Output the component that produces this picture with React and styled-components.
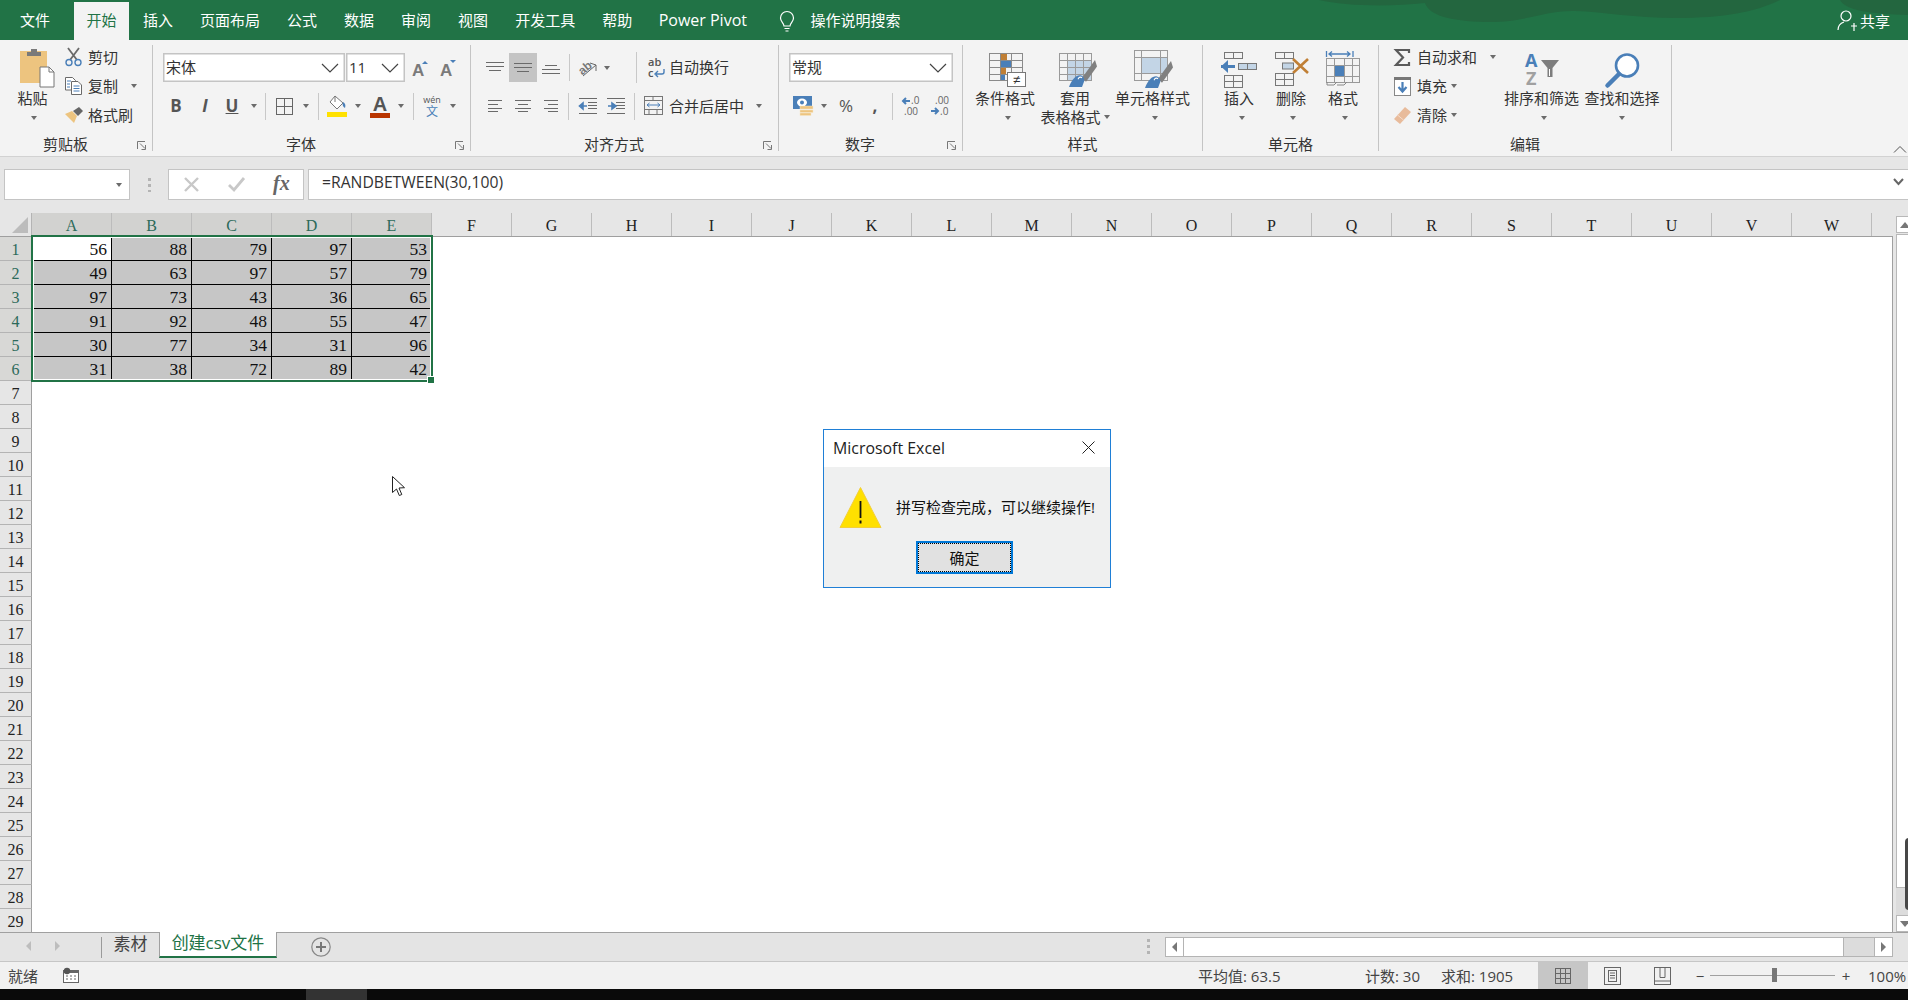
import React from "react";
import styled, { createGlobalStyle } from "styled-components";

const UI = `"Open Sans", "Noto Sans CJK SC", sans-serif`;
const SERIF = `"Liberation Serif", "Noto Sans CJK SC", serif`;
const GRAY = "#6a6a6a";
const BLUE = "#4a7fb8";
const TAN = "#edc47f";
const BROWN = "#c07f35";
const PALE = "#c3d5e6";
const LINE = "#8a8a8a";

const Global = createGlobalStyle`
  html, body { margin: 0; padding: 0; background: #fff; }
  * { box-sizing: border-box; }
  svg { overflow: visible; }
`;

const Frame = styled.div`
  position: relative; width: 1908px; height: 1000px; overflow: hidden;
  display: flex; flex-direction: column; font: 15px/20px ${UI}; color: #333; background: #fff;
`;

/* ---------- title bar ---------- */
const TitleBar = styled.div`
  position: relative; flex: none; height: 40px; background: #217346;
  display: flex; align-items: flex-end; padding-left: 6px; color: #fff;
`;
const Watermark = styled.svg`position: absolute; left: 0; top: 0;`;
const Tab = styled.div`
  position: relative; flex: none; height: 38px; line-height: 37px; padding: 0 ${p => p.$pad ?? 13.5}px;
  margin-left: ${p => p.$ml || 0}px; white-space: nowrap; font-size: ${p => p.$fs || 15}px;
  background: ${p => (p.$active ? "#f3f3f3" : "transparent")};
  color: ${p => (p.$active ? "#217346" : "#fff")};
`;
const Bulb = styled.svg`position: relative; flex: none; margin: 0 0 7px 20px;`;
const Share = styled.div`
  position: relative; margin-left: auto; margin-right: 18px; height: 38px; display: flex; align-items: center; gap: 3px;
`;

/* ---------- ribbon ---------- */
const Ribbon = styled.div`
  position: relative; flex: none; height: 117px; background: #f3f3f3; padding-top: 5px;
  display: flex; border-bottom: 1px solid #d2d2d2;
`;
const Group = styled.div`
  position: relative; flex: none; width: ${p => p.$w}px; height: 106px; border-right: 1px solid #c4c4c4;
`;
const GroupBody = styled.div`display: flex; height: 90px;`;
const Column = styled.div`flex: none; display: flex; flex-direction: column; margin-left: ${p => p.$ml || 0}px; height: 90px;`;
const GroupLabel = styled.div`
  height: 16px; line-height: 18px; text-align: center; padding-right: ${p => (p.$launch ? 21 : 0)}px; white-space: nowrap;
`;
const Launcher = styled.svg`position: absolute; right: 5px; bottom: 1px;`;
const Row = styled.div`
  display: flex; align-items: center; height: ${p => p.$h}px; margin-top: ${p => p.$mt || 0}px;
`;
const Slot = styled.div`
  flex: none; display: flex; align-items: center; justify-content: center; height: 100%;
  width: ${p => p.$w}px; margin-left: ${p => p.$ml || 0}px;
  background: ${p => p.$bg || "transparent"};
`;
const LeftSlot = styled(Slot)`justify-content: flex-start;`;
const Txt = styled.span`flex: none; white-space: nowrap; margin-left: ${p => p.$ml || 0}px; margin-bottom: ${p => p.$mb || 0}px;`;
const Caret = styled.i`
  display: block; flex: none; width: 0; height: 0; margin-left: ${p => p.$ml || 0}px;
  border-left: 3.5px solid transparent; border-right: 3.5px solid transparent; border-top: 4px solid #6b6b6b;
`;
const Sep = styled.div`
  flex: none; width: 1px; height: ${p => p.$h || 27}px; background: #c8c8c8; margin-left: ${p => p.$ml || 0}px; margin-right: ${p => p.$mr || 0}px;
`;
const Combo = styled.div`
  flex: none; display: flex; align-items: center; justify-content: space-between; height: 29px;
  width: ${p => p.$w}px; margin-left: ${p => p.$ml || 0}px; padding: 0 5px 0 2px;
  background: #fff; border: 1px solid #c4c4c4; box-shadow: inset 0 0 0 0.5px #c4c4c4;
`;
const ComboText = styled.span`padding-bottom: 2px;`;
const Paste = styled.div`
  flex: none; width: 65px; height: 90px; display: flex; flex-direction: column; align-items: center;
`;
const PasteIcon = styled.div`height: 43px; padding: 2px 0 0 9px;`;
const SmallButton = styled.div`
  display: flex; align-items: center; height: 24px; margin-bottom: 5px; white-space: nowrap;
`;
const IconCell = styled.div`flex: none; width: 23px; display: flex; align-items: center;`;
const Large = styled.div`
  flex: none; width: ${p => p.$w}px; margin-left: ${p => p.$ml || 0}px; height: 90px; display: flex; flex-direction: column; align-items: center;
`;
const LargeIcon = styled.div`
  height: 43px; display: flex; align-items: flex-end; justify-content: center; width: 100%; padding-left: ${p => p.$dx || 0}px;
`;
const LargeLine = styled.div`height: 19.5px; display: flex; align-items: center; justify-content: center; white-space: nowrap; line-height: 20px;`;
const CaretLine = styled(LargeLine)`padding-top: 1px;`;
const Collapse = styled.svg`position: absolute; right: 1px; bottom: 3px;`;

/* ---------- formula bar ---------- */
const FormulaBand = styled.div`
  flex: none; height: 56px; background: #e6e6e6; padding-top: 11px; display: flex; align-items: flex-start; border-top: 1px solid #e6e6e6;
`;
const FieldBox = styled.div`
  flex: none; height: 31px; background: #fff; border: 1px solid #c4c4c4; margin-left: ${p => p.$ml}px;
  width: ${p => p.$w}px; display: flex; align-items: center; justify-content: ${p => p.$justify || "flex-start"};
`;
const Grip = styled.div`
  flex: none; width: 3px; height: ${p => p.$h}px; margin-left: ${p => p.$ml}px; margin-top: ${p => p.$mt || 0}px;
  background: repeating-linear-gradient(#b4b4b4 0 3px, transparent 3px 6px);
`;
const Formula = styled.div`
  flex: 1; height: 31px; margin-left: 4px; background: #fff; border: 1px solid #c4c4c4; border-right: none;
  display: flex; align-items: center; padding: 0 4px 5px 13px; justify-content: space-between; font-size: 15.7px;
`;

/* ---------- sheet ---------- */
const SheetArea = styled.div`flex: none; height: 719px; display: flex; background: #e6e6e6;`;
const GridPane = styled.div`position: relative; flex: none; width: 1893px; display: flex; flex-direction: column;`;
const HeaderRow = styled.div`flex: none; height: 24px; display: flex; border-bottom: 1px solid #9f9f9f;`;
const Corner = styled.div`flex: none; width: 32px; display: flex; align-items: center; justify-content: flex-end; padding-right: 3px; border-right: 1px solid #b4b4b4;`;
const ColHead = styled.div`
  flex: none; width: 80px; text-align: center; font: 16px/23px ${SERIF}; padding-top: 1px; border-right: 1px solid #bcbcbc;
  background: ${p => (p.$sel ? "#d2d2d0" : "#e6e6e6")};
  color: ${p => (p.$sel ? "#2c6a5a" : "#222")};
`;
const Rows = styled.div`flex: 1; background: #fff; border-right: 1px solid #a0a0a0; overflow: hidden;`;
const SheetRow = styled.div`display: flex; height: 24px;`;
const RowHead = styled.div`
  flex: none; width: 32px; text-align: center; font: 16px/23px ${SERIF}; padding-top: 1px; border-right: 1px solid #9f9f9f; border-bottom: 1px solid #b4b4b4;
  background: ${p => (p.$sel ? "#d8d8d6" : "#e6e6e6")};
  color: ${p => (p.$sel ? "#2c6a5a" : "#222")};
`;
const Cell = styled.div`
  flex: none; width: 80px; text-align: right; padding: 1px 4px 0 0; font: 17.5px/22px ${SERIF}; color: #111;
  border-right: 1px solid #000; border-bottom: 1px solid #000;
  background: ${p => (p.$first ? "#fff" : "#c6c6c6")};
`;
const Selection = styled.div`
  position: absolute; left: 31px; top: 22px; width: 402px; height: 147px; border: 2px solid #217346; pointer-events: none;
  box-shadow: inset 0 0 0 1px #fff;
`;
const Handle = styled.div`
  position: absolute; right: -3px; bottom: -3px; width: 6px; height: 6px; background: #217346; outline: 1px solid #fff;
`;
const VScroll = styled.div`
  flex: none; width: 12px; margin-left: 3px; padding-top: 3px; display: flex; flex-direction: column; overflow: hidden;
`;
const ScrollBtn = styled.div`
  flex: none; height: ${p => p.$h}px; background: #fff; border: 1px solid #b8b8b8; border-right: none;
  display: flex; align-items: center; justify-content: center; padding-left: 4px;
`;
const VThumb = styled.div`flex: none; height: 654px; margin-top: 1px; background: #fff; border: 1px solid #b8b8b8; border-right: none;`;
const VTrack = styled.div`flex: 1; background: #dcdcdc;`;
const Peek = styled.div`
  position: absolute; left: 1905px; top: 838px; width: 10px; height: 72px; background: #474747; border-radius: 4px;
`;
const Triangle = styled.i`
  display: block; width: 0; height: 0;
  ${p => p.$dir === "up" && `border-left:5px solid transparent;border-right:5px solid transparent;border-bottom:6px solid #777;`}
  ${p => p.$dir === "down" && `border-left:5px solid transparent;border-right:5px solid transparent;border-top:6px solid #777;`}
  ${p => p.$dir === "left" && `border-top:5px solid transparent;border-bottom:5px solid transparent;border-right:5px solid ${p.$c || "#777"};`}
  ${p => p.$dir === "right" && `border-top:5px solid transparent;border-bottom:5px solid transparent;border-left:5px solid ${p.$c || "#777"};`}
`;

/* ---------- sheet tabs ---------- */
const TabsBar = styled.div`
  flex: none; height: 30px; background: #e4e4e4; display: flex; align-items: flex-start; border-top: 1px solid #a0a0a0; border-bottom: 1px solid #c6c6c6;
`;
const NavSlot = styled.div`flex: none; height: 26px; margin-left: ${p => p.$ml}px; width: 6px; display: flex; align-items: center; justify-content: center;`;
const TabDivider = styled.div`flex: none; width: 1px; height: 21px; margin: 4px 0 0 ${p => p.$ml}px; background: #9a9a9a;`;
const SheetTab = styled.div`
  flex: none; width: ${p => p.$w}px; height: 25px; font-size: 17px; line-height: 22px; text-align: center; white-space: nowrap;
  ${p => p.$active
    ? `background:#fff;color:#217346;border-left:1px solid #a0a0a0;border-right:1px solid #a0a0a0;border-bottom:2px solid #217346;margin-top:-1px;height:26px;`
    : `color:#444;`}
`;
const AddSheet = styled.svg`flex: none; margin: 4px 0 0 34px;`;
const HScrollGroup = styled.div`
  margin-left: auto; margin-right: 15px; display: flex; align-items: flex-start; height: 100%;
`;
const HBar = styled.div`
  flex: none; display: flex; width: 728px; height: 20px; margin: 4px 0 0 15px; border: 1px solid #b4b4b4; background: #dcdcdc;
`;
const HBtn = styled.div`flex: none; width: 18px; background: #fff; display: flex; align-items: center; justify-content: center; ${p => p.$end ? "margin-left:auto;border-left:1px solid #b4b4b4;" : "border-right:1px solid #b4b4b4;"}`;
const HThumb = styled.div`flex: none; width: 660px; background: #fff; border-right: 1px solid #b4b4b4;`;

/* ---------- status bar ---------- */
const StatusBar = styled.div`
  flex: none; height: 27px; background: #f1f1f1; display: flex; align-items: center; color: #444; padding-left: 8px;
`;
const StatusRight = styled.div`margin-left: auto; display: flex; align-items: center; height: 100%; width: 710px;`;
const ViewButton = styled.div`
  flex: none; width: ${p => p.$w}px; margin-left: ${p => p.$ml || 0}px; height: 100%; display: flex; align-items: center; justify-content: center;
  background: ${p => (p.$on ? "#c6c6c6" : "transparent")};
`;
const Zoomer = styled.div`position: relative; flex: none; width: 125px; height: 1px; background: #a0a0a0; margin-left: 5px;`;
const ZoomThumb = styled.div`position: absolute; left: 62px; top: -7px; width: 5px; height: 14px; background: #777;`;
const Taskbar = styled.div`
  position: relative; flex: none; height: 11px; background: #0a0a0a; overflow: hidden;
`;
const TaskActive = styled.div`position: absolute; left: 306px; top: 0; width: 61px; height: 11px; background: #333;`;
const Clock = styled.div`position: absolute; left: 1762px; top: 7px; font-size: 15px; line-height: 20px; color: #fff;`;

/* ---------- dialog ---------- */
const Dialog = styled.div`
  position: absolute; left: 823px; top: 429px; width: 288px; height: 159px; background: #eff0f0; border: 1px solid #1f7fd6;
  display: flex; flex-direction: column;
`;
const DialogTitle = styled.div`
  flex: none; height: 37px; background: #fff; display: flex; align-items: center; justify-content: space-between;
  padding: 0 15px 2px 9px; font-size: 15.9px; color: #222;
`;
const DialogBody = styled.div`flex: 1; display: flex; align-items: flex-start; padding: 20px 0 0 16px;`;
const DialogText = styled.div`margin: 9.5px 0 0 15px; white-space: nowrap; color: #111;`;
const DialogFoot = styled.div`flex: none; height: 46px; display: flex; justify-content: center; padding-right: 5px;`;
const OkButton = styled.div`
  width: 97px; height: 33px; border: 2px solid #0078d7; background: #e1e1e1; color: #111; font-size: 15px;
  display: flex; align-items: center; justify-content: center; outline: 1px dotted #000; outline-offset: -3px;
`;
const Pointer = styled.svg`position: absolute; left: 392px; top: 476px;`;

/* ---------- icons ---------- */
const Table = ({ x = 0, y = 0, w, h, cols = [], rows = [], c = LINE, sw = 1 }) => (
  <g stroke={c} strokeWidth={sw} fill="none">
    <rect x={x + 0.5} y={y + 0.5} width={w} height={h} />
    {cols.map(v => <path key={"c" + v} d={`M${x + v + 0.5} ${y}v${h}`} />)}
    {rows.map(v => <path key={"r" + v} d={`M${x} ${y + v + 0.5}h${w}`} />)}
  </g>
);
const LaunchIcon = () => (
  <Launcher width="10" height="9" viewBox="0 0 10 9" fill="none" stroke="#777">
    <path d="M.5 8V.5H8M3 2.5l5 5M8.5 4v4.5H4.5" />
  </Launcher>
);
const Chevron = () => (
  <svg width="18" height="10" viewBox="0 0 18 10" fill="none" stroke="#444" strokeWidth="1.2"><path d="M1 1l8 8 8-8" /></svg>
);
const Clipboard = () => (
  <svg width="35" height="41" viewBox="0 0 35 41">
    <rect x="0" y="4" width="27" height="32" fill={TAN} />
    <path d="M7 5h14v4H7zM11 2h6v4h-6z" fill="#7a7a7a" />
    <path d="M20 20h9l5 5v15H20z" fill="#fff" stroke="#777" />
    <path d="M29 20v5h5" fill="none" stroke="#777" />
  </svg>
);
const Scissors = () => (
  <svg width="18" height="18" viewBox="0 0 18 18" fill="none">
    <path d="M3 0l9 12M14 0L5 12" stroke={GRAY} strokeWidth="1.8" />
    <circle cx="4" cy="14.5" r="3" stroke={BLUE} strokeWidth="1.4" />
    <circle cx="13" cy="14.5" r="3" stroke={BLUE} strokeWidth="1.4" />
  </svg>
);
const CopyIcon = () => (
  <svg width="18" height="18" viewBox="0 0 18 18" fill="none">
    <path d="M.5.5h7l3 3V13H.5z" fill="#fff" stroke={GRAY} />
    <path d="M6.5 4.5H13l3.5 3.5v9.5h-10z" fill="#fff" stroke={GRAY} />
    <path d="M2 4h4M2 7h3M2 10h3M8.5 9h6M8.5 11.5h6M8.5 14h6" stroke={BLUE} />
  </svg>
);
const BrushIcon = () => (
  <svg width="18" height="16" viewBox="0 0 18 16">
    <path d="M0 7l7-3 5 5-3 7z" fill={TAN} />
    <path d="M8 4l6-4 4 4-5 5z" fill="#666" />
  </svg>
);
const FontA = ({ up }) => (
  <svg width="18" height="20" viewBox="0 0 18 20">
    <text x="0" y="18" fontFamily="Liberation Sans" fontWeight="700" fontSize="17" fill="#7a7a7a">A</text>
    <path d={up ? "M10 6l3-3 3 3z" : "M10 2l3 3 3-3z"} fill={BLUE} />
  </svg>
);
const Glyph = styled.span`
  font-weight: ${p => (p.$b ? 700 : 400)}; color: #555;
  font-style: ${p => (p.$i ? "italic" : "normal")}; text-decoration: ${p => (p.$u ? "underline" : "none")};
  font-family: "Open Sans", sans-serif; font-size: 17px; line-height: 20px;
`;
const BorderIcon = () => (
  <svg width="17" height="17" viewBox="0 0 17 17"><Table w={16} h={16} cols={[8]} rows={[8]} c="#666" /></svg>
);
const FillIcon = () => (
  <svg width="20" height="22" viewBox="0 0 20 22">
    <path d="M8 1l8 7-6 6-7-7z" fill="#fff" stroke="#777" />
    <path d="M8 1v6" stroke="#777" />
    <path d="M16 7c2 1 3 3 2 6-2-1-3-3-2-6z" fill={BLUE} />
    <rect x="0" y="17" width="20" height="5" fill="#ffe100" />
  </svg>
);
const ColorA = () => (
  <svg width="20" height="24" viewBox="0 0 20 24">
    <text x="10" y="17" textAnchor="middle" fontFamily="Liberation Sans" fontWeight="700" fontSize="20" fill="#555">A</text>
    <rect x="0" y="19" width="20" height="5" fill="#b93500" />
  </svg>
);
const WenIcon = () => (
  <svg width="18" height="22" viewBox="0 0 18 22">
    <text x="9" y="8" textAnchor="middle" fontFamily="Open Sans" fontSize="9" fill="#555">wén</text>
    <text x="9" y="21" textAnchor="middle" fontFamily="Noto Sans CJK SC" fontSize="12" fill={BLUE}>文</text>
  </svg>
);
const Lines = ({ rows, w = 18, h = 14 }) => (
  <svg width={w} height={h} viewBox={`0 0 ${w} ${h}`} stroke="#6a6a6a">
    {rows.map(([a, b, y]) => <path key={y} d={`M${a} ${y + 0.5}H${b}`} />)}
  </svg>
);
const Orient = () => (
  <svg width="20" height="18" viewBox="0 0 20 18">
    <text x="0" y="13" transform="rotate(-40 7 9)" fontFamily="Liberation Sans" fontWeight="700" fontSize="12" fill="#777">ab</text>
    <path d="M5 17L18 6M12 4l6 2v6" fill="none" stroke="#666" />
  </svg>
);
const Indent = ({ rev }) => (
  <svg width="18" height="16" viewBox="0 0 18 16">
    <path d="M0 .5h18M9 4.5h9M9 7.5h9M9 10.5h9M0 15.5h18" stroke="#6a6a6a" />
    {rev
      ? <path d="M1 8h4V5l4 3-4 3V8" fill={BLUE} stroke={BLUE} strokeWidth="1.6" />
      : <path d="M8 8H4V5L0.5 8 4 11V8" fill={BLUE} stroke={BLUE} strokeWidth="1.6" />}
  </svg>
);
const WrapIcon = () => (
  <svg width="17" height="20" viewBox="0 0 17 20">
    <text x="0" y="8" fontFamily="Open Sans" fontWeight="600" fontSize="11" fill="#555">ab</text>
    <text x="0" y="19" fontFamily="Open Sans" fontWeight="600" fontSize="11" fill="#555">c</text>
    <path d="M16 11v3c0 1-1 2-2 2H8M10 13l-3 3 3 3" fill="none" stroke={BLUE} strokeWidth="1.4" />
  </svg>
);
const MergeIcon = () => (
  <svg width="20" height="20" viewBox="0 0 20 20">
    <Table w={18} h={18} rows={[4, 13]} cols={[]} c="#777" />
    <path d="M9 .5v4M5 13.5v5M13 13.5v5" stroke="#777" />
    <path d="M3 9h13M5.5 7L3 9l2.5 2M13.5 7L16 9l-2.5 2" fill="none" stroke={BLUE} />
  </svg>
);
const Currency = () => (
  <svg width="21" height="20" viewBox="0 0 21 20">
    <rect x="0" y="0" width="19" height="13" fill={BLUE} />
    <ellipse cx="9" cy="6.5" rx="5" ry="4" fill="#fff" />
    <circle cx="9" cy="6.5" r="2" fill={BLUE} />
    <path d="M7 10h13v3H7zM7 14h13v2.5H7zM7 17h11v2.5H7z" fill={TAN} stroke="#f7e6c6" strokeWidth=".5" />
  </svg>
);
const Decimal = ({ more }) => (
  <svg width="19" height="20" viewBox="0 0 19 20" fontFamily="Open Sans" fontSize="10" fill="#666">
    {more ? (
      <>
        <text x="5" y="8">.00</text>
        <path d="M1 15h6M5 12l3 3-3 3" stroke={BLUE} strokeWidth="2" fill="none" />
        <text x="10" y="19">.0</text>
      </>
    ) : (
      <>
        <path d="M8 5H2M4 2L1 5l3 3" stroke={BLUE} strokeWidth="2" fill="none" />
        <text x="9" y="8">.0</text>
        <text x="2" y="19">.00</text>
      </>
    )}
  </svg>
);
const Brush = ({ x, y }) => (
  <g transform={`translate(${x} ${y}) scale(1 1.28)`}>
    <path d="M26 0l2 5-11 12-4-3z" fill="#808080" />
    <path d="M0 21c3-6 7-9 11-9 3 0 5 3 4 5l-2 4z" fill={BLUE} />
    <path d="M9 15c1-2 3-2 4-1" stroke="#fff" fill="none" />
  </g>
);
const CondIcon = () => (
  <svg width="38" height="35" viewBox="0 0 38 35">
    <path d="M11 0h7v7h-7zM11 14h6v7h-6z" fill={BROWN} />
    <path d="M11 7h11v7H11zM11 21h5v6h-5z" fill={BLUE} />
    <Table w={33} h={27} cols={[11, 22]} rows={[7, 14, 21]} c="#8a8a8a" />
    <rect x="18.5" y="19.5" width="18" height="14" fill="#fff" stroke="#777" />
    <text x="27.5" y="31" textAnchor="middle" fontFamily="Liberation Sans" fontSize="13" fill="#333">≠</text>
  </svg>
);
const TableFmtIcon = () => (
  <svg width="38" height="35" viewBox="0 0 38 35">
    <rect x="8" y="7" width="25" height="20" fill={PALE} />
    <Table w={32} h={27} cols={[8, 16, 24]} rows={[7, 14, 21]} c="#9a9a9a" />
    <Brush x={10} y={7} />
  </svg>
);
const CellStyleIcon = () => (
  <svg width="39" height="38" viewBox="0 0 39 38">
    <rect x="8" y="7" width="25" height="16" fill={PALE} />
    <Table w={33} h={30} cols={[7, 26]} rows={[7, 23]} c="#9a9a9a" />
    <Brush x={11} y={11} />
  </svg>
);
const InsertIcon = () => (
  <svg width="37" height="36" viewBox="0 0 37 36">
    <Table x={3} y={0} w={18} h={6} cols={[9]} c="#777" />
    <path d="M0 14.5h14" stroke={BLUE} strokeWidth="3" />
    <path d="M7 8l-7 6.5L7 21z" fill={BLUE} />
    <rect x="17.5" y="11.5" width="18" height="6" fill={PALE} stroke="#777" />
    <path d="M26.5 11.5v6" stroke="#777" />
    <Table x={3} y={23} w={18} h={12} cols={[9]} rows={[6]} c="#777" />
  </svg>
);
const DeleteIcon = () => (
  <svg width="36" height="36" viewBox="0 0 36 36">
    <Table x={0} y={0} w={18} h={6} cols={[9]} c="#777" />
    <rect x="7.5" y="11" width="11" height="6" fill={PALE} stroke="#777" />
    <path d="M18 7l15 14M33 7L18 21" stroke={BROWN} strokeWidth="2.6" />
    <Table x={0} y={21} w={18} h={12} cols={[9]} rows={[6]} c="#777" />
  </svg>
);
const FormatIcon = () => (
  <svg width="34" height="37" viewBox="0 0 34 37">
    <path d="M.5 0v6M27 0v6M3 3h21M6 .5L3 3l3 2.5M21 .5L24 3l-3 2.5" stroke={BLUE} fill="none" strokeWidth="1.3" />
    <rect x="8" y="14" width="10" height="11" fill={BLUE} />
    <Table y={7} w={33} h={24} cols={[8, 18, 26]} rows={[7, 18]} c="#999" />
    <path d="M1 31v3h7l3-3M11 34h7l3-3" fill="none" stroke="#888" />
  </svg>
);
const Sigma = () => (
  <svg width="16" height="17" viewBox="0 0 16 17"><path d="M15 4V1H2l7 7.5L2 16h13v-3" fill="none" stroke="#5a5a5a" strokeWidth="2.2" /></svg>
);
const FillDown = () => (
  <svg width="17" height="19" viewBox="0 0 17 19">
    <rect x=".5" y=".5" width="16" height="18" fill="#fff" stroke="#888" />
    <rect x="0" y="0" width="17" height="3" fill="#777" />
    <path d="M8.5 5v9M4.5 10l4 4.5 4-4.5" stroke={BLUE} strokeWidth="2.2" fill="none" />
  </svg>
);
const Eraser = () => (
  <svg width="17" height="17" viewBox="0 0 17 17"><path d="M11 0l6 5-11 12-6-5z" fill="#e8bb9b" /><path d="M3.5 8l6 5" stroke="#f5dccb" /></svg>
);
const SortIcon = () => (
  <svg width="36" height="36" viewBox="0 0 36 36" fontFamily="Open Sans" fontWeight="700" fontSize="18">
    <text x="0" y="15" fill={BLUE}>A</text>
    <text x="1" y="33" fill="#a0a0a0">Z</text>
    <path d="M16 8h18l-6.5 8v9h-5v-9z" fill="#7d7d7d" />
    <path d="M24.5 17v7" stroke="#fff" />
  </svg>
);
const Magnifier = () => (
  <svg width="35" height="35" viewBox="0 0 35 35" fill="none">
    <circle cx="22" cy="12.5" r="11" stroke={BLUE} strokeWidth="2.6" fill="#fff" />
    <path d="M14 21L2.5 32.5" stroke={BLUE} strokeWidth="4.5" strokeLinecap="round" />
  </svg>
);

const cols = "ABCDEFGHIJKLMNOPQRSTUVW".split("");
const data = [
  [56, 88, 79, 97, 53],
  [49, 63, 97, 57, 79],
  [97, 73, 43, 36, 65],
  [91, 92, 48, 55, 47],
  [30, 77, 34, 31, 96],
  [31, 38, 72, 89, 42],
];
const rowNumbers = Array.from({ length: 29 }, (_, i) => i + 1);

export default function App() {
  return (
    <Frame>
      <Global />
      <TitleBar>
        <Watermark width="1908" height="40" viewBox="0 0 1908 40">
          <path d="M1319 0c25 6 70 7 106 3 4 12 24 18 60 19 40 1 60-12 90-11 30 1 60 7 100 7 50 0 80-6 105-18z" fill="#23663f" />
          <path d="M1840 0c5 10 30 14 68 15V0z" fill="#23663f" />
        </Watermark>
        <Tab $pad={14}>文件</Tab>
        <Tab $active $ml={10} $pad={12.5}>开始</Tab>
        <Tab $ml={.5}>插入</Tab>
        <Tab>页面布局</Tab>
        <Tab>公式</Tab>
        <Tab>数据</Tab>
        <Tab>审阅</Tab>
        <Tab>视图</Tab>
        <Tab>开发工具</Tab>
        <Tab>帮助</Tab>
        <Tab $pad={13} $fs={16}>Power Pivot</Tab>
        <Bulb width="14" height="22" viewBox="0 0 14 22" fill="none" stroke="#fff" strokeWidth="1.2">
          <path d="M4 15c0-3-3.5-4-3.5-8a6.5 6.5 0 0113 0c0 4-3.5 5-3.5 8zM4.5 17.5h5M5.5 20h3" />
        </Bulb>
        <Tab $pad={13} $ml={3.5}>操作说明搜索</Tab>
        <Share>
          <svg width="20" height="22" viewBox="0 0 20 22" fill="none" stroke="#fff" strokeWidth="1.2">
            <circle cx="9" cy="6" r="5" />
            <path d="M1 20c0-5 3-7 6-8M14 16h6M17 13v8" />
          </svg>
          <Txt>共享</Txt>
        </Share>
      </TitleBar>

      <Ribbon>
        <Group $w={153}>
          <GroupBody>
            <Paste>
              <PasteIcon><Clipboard /></PasteIcon>
              <LargeLine>粘贴</LargeLine>
              <CaretLine><Caret $ml={3} /></CaretLine>
            </Paste>
            <Column>
              <SmallButton><IconCell><Scissors /></IconCell><Txt>剪切</Txt></SmallButton>
              <SmallButton><IconCell><CopyIcon /></IconCell><Txt>复制</Txt><Caret $ml={13} /></SmallButton>
              <SmallButton><IconCell><BrushIcon /></IconCell><Txt>格式刷</Txt></SmallButton>
            </Column>
          </GroupBody>
          <GroupLabel $launch>剪贴板</GroupLabel>
          <LaunchIcon />
        </Group>

        <Group $w={318}>
          <GroupBody>
            <Column $ml={10}>
              <Row $h={29} $mt={8}>
                <Combo $w={182}><ComboText>宋体</ComboText><Chevron /></Combo>
                <Combo $w={59} $ml={1}><ComboText>11</ComboText><Chevron /></Combo>
                <Slot $w={27} $ml={2.5}><FontA up /></Slot>
                <Slot $w={27} $ml={1}><FontA /></Slot>
              </Row>
              <Row $h={30} $mt={9}>
                <Slot $w={26}><Glyph $b>B</Glyph></Slot>
                <Slot $w={32}><Glyph $i $b>I</Glyph></Slot>
                <Slot $w={22}><Glyph $b $u>U</Glyph></Slot>
                <Slot $w={6} $ml={8}><Caret /></Slot>
                <Sep $ml={8} />
                <Slot $w={17} $ml={10}><BorderIcon /></Slot>
                <Slot $w={6} $ml={10}><Caret /></Slot>
                <Sep $ml={9} />
                <Slot $w={20} $ml={8}><FillIcon /></Slot>
                <Slot $w={6} $ml={8}><Caret /></Slot>
                <Slot $w={20} $ml={9}><ColorA /></Slot>
                <Slot $w={6} $ml={8}><Caret /></Slot>
                <Sep $ml={9} />
                <Slot $w={18} $ml={9}><WenIcon /></Slot>
                <Slot $w={6} $ml={9}><Caret /></Slot>
              </Row>
            </Column>
          </GroupBody>
          <GroupLabel $launch>字体</GroupLabel>
          <LaunchIcon />
        </Group>

        <Group $w={308}>
          <GroupBody>
            <Column>
              <Row $h={29} $mt={8}>
                <Slot $w={18} $ml={15}><Lines rows={[[0, 18, 1], [0, 18, 5], [3, 15, 9]]} /></Slot>
                <Slot $w={28} $ml={5} $bg="#c4c4c4"><Lines rows={[[0, 18, 2], [0, 18, 6], [3, 15, 10]]} /></Slot>
                <Slot $w={18} $ml={5}><Lines rows={[[3, 15, 4], [0, 18, 8], [0, 18, 12]]} /></Slot>
                <Sep $ml={9} />
                <Slot $w={20} $ml={8}><Orient /></Slot>
                <Slot $w={6} $ml={6}><Caret /></Slot>
                <Sep $ml={26} $h={31} />
                <Slot $w={17} $ml={11}><WrapIcon /></Slot>
                <Txt $ml={4} $mb={2}>自动换行</Txt>
              </Row>
              <Row $h={30} $mt={9}>
                <Slot $w={14} $ml={17}><Lines w={14} h={14} rows={[[0, 14, 1], [0, 10, 5], [0, 14, 9], [0, 10, 12]]} /></Slot>
                <Slot $w={16} $ml={13}><Lines w={16} h={14} rows={[[0, 16, 1], [3, 13, 5], [0, 16, 9], [3, 13, 12]]} /></Slot>
                <Slot $w={14} $ml={13}><Lines w={14} h={14} rows={[[0, 14, 1], [4, 14, 5], [0, 14, 9], [4, 14, 12]]} /></Slot>
                <Sep $ml={10} />
                <Slot $w={18} $ml={10}><Indent /></Slot>
                <Slot $w={18} $ml={10}><Indent rev /></Slot>
                <Sep $ml={9} />
                <Slot $w={20} $ml={9}><MergeIcon /></Slot>
                <Txt $ml={5}>合并后居中</Txt>
                <Caret $ml={12} />
              </Row>
            </Column>
          </GroupBody>
          <GroupLabel $launch>对齐方式</GroupLabel>
          <LaunchIcon />
        </Group>

        <Group $w={184}>
          <GroupBody>
            <Column $ml={10}>
              <Row $h={29} $mt={8}>
                <Combo $w={164}><ComboText>常规</ComboText><Chevron /></Combo>
              </Row>
              <Row $h={30} $mt={9}>
                <Slot $w={21} $ml={4}><Currency /></Slot>
                <Slot $w={6} $ml={7}><Caret /></Slot>
                <Slot $w={16} $ml={11}><Glyph>%</Glyph></Slot>
                <Slot $w={8} $ml={17}><Glyph $b>,</Glyph></Slot>
                <Sep $ml={13} />
                <Slot $w={19} $ml={9}><Decimal /></Slot>
                <Slot $w={19} $ml={9}><Decimal more /></Slot>
              </Row>
            </Column>
          </GroupBody>
          <GroupLabel $launch>数字</GroupLabel>
          <LaunchIcon />
        </Group>

        <Group $w={240}>
          <GroupBody>
            <Large $w={60} $ml={12}>
              <LargeIcon $dx={5}><CondIcon /></LargeIcon>
              <LargeLine>条件格式</LargeLine>
              <CaretLine><Caret $ml={5} /></CaretLine>
            </Large>
            <Large $w={70} $ml={5}>
              <LargeIcon $dx={6}><TableFmtIcon /></LargeIcon>
              <LargeLine>套用</LargeLine>
              <LargeLine>表格格式<Caret $ml={3} /></LargeLine>
            </Large>
            <Large $w={75} $ml={5}>
              <LargeIcon $dx={2}><CellStyleIcon /></LargeIcon>
              <LargeLine>单元格样式</LargeLine>
              <CaretLine><Caret $ml={5} /></CaretLine>
            </Large>
          </GroupBody>
          <GroupLabel>样式</GroupLabel>
        </Group>

        <Group $w={176}>
          <GroupBody>
            <Large $w={60} $ml={6}>
              <LargeIcon><InsertIcon /></LargeIcon>
              <LargeLine>插入</LargeLine>
              <CaretLine><Caret $ml={5} /></CaretLine>
            </Large>
            <Large $w={44}>
              <LargeIcon $dx={4}><DeleteIcon /></LargeIcon>
              <LargeLine>删除</LargeLine>
              <CaretLine><Caret $ml={3} /></CaretLine>
            </Large>
            <Large $w={60}>
              <LargeIcon><FormatIcon /></LargeIcon>
              <LargeLine>格式</LargeLine>
              <CaretLine><Caret $ml={4} /></CaretLine>
            </Large>
          </GroupBody>
          <GroupLabel>单元格</GroupLabel>
        </Group>

        <Group $w={293}>
          <GroupBody>
            <Column $ml={15}>
              <SmallButton><IconCell><Sigma /></IconCell><Txt>自动求和</Txt><Caret $ml={13} /></SmallButton>
              <SmallButton><IconCell><FillDown /></IconCell><Txt>填充</Txt><Caret $ml={4} /></SmallButton>
              <SmallButton><IconCell><Eraser /></IconCell><Txt>清除</Txt><Caret $ml={4} /></SmallButton>
            </Column>
            <Large $w={75} $ml={8}>
              <LargeIcon $dx={2}><SortIcon /></LargeIcon>
              <LargeLine>排序和筛选</LargeLine>
              <CaretLine><Caret $ml={5} /></CaretLine>
            </Large>
            <Large $w={76} $ml={5}>
              <LargeIcon><Magnifier /></LargeIcon>
              <LargeLine>查找和选择</LargeLine>
              <CaretLine><Caret /></CaretLine>
            </Large>
          </GroupBody>
          <GroupLabel>编辑</GroupLabel>
        </Group>

        <Collapse width="14" height="8" viewBox="0 0 14 8" fill="none" stroke="#555"><path d="M1 7.5l6-6 6 6" /></Collapse>
      </Ribbon>

      <FormulaBand>
        <FieldBox $ml={4} $w={126} $justify="flex-end"><Slot $w={20}><Caret /></Slot></FieldBox>
        <Grip $ml={18} $h={14} $mt={9} />
        <FieldBox $ml={17} $w={136}>
          <Slot $w={45}>
            <svg width="15" height="15" viewBox="0 0 15 15" stroke="#c8c8c8" strokeWidth="2.4"><path d="M1 1l13 13M14 1L1 14" /></svg>
          </Slot>
          <Slot $w={45}>
            <svg width="17" height="15" viewBox="0 0 17 15" stroke="#c8c8c8" strokeWidth="2.8" fill="none"><path d="M1 8l5 5L16 1" /></svg>
          </Slot>
          <Slot $w={45}>
            <svg width="20" height="20" viewBox="0 0 20 20"><text x="1" y="15" fontFamily="Liberation Serif" fontStyle="italic" fontWeight="700" fontSize="20" fill="#666">fx</text></svg>
          </Slot>
        </FieldBox>
        <Formula>
          <span>=RANDBETWEEN(30,100)</span>
          <svg width="11" height="8" viewBox="0 0 11 8" fill="none" stroke="#666" strokeWidth="2"><path d="M1 1l4.5 5L10 1" /></svg>
        </Formula>
      </FormulaBand>

      <SheetArea>
        <GridPane>
          <HeaderRow>
            <Corner>
              <svg width="16" height="16" viewBox="0 0 16 16"><path d="M16 0v16H0z" fill="#bcbcbc" /></svg>
            </Corner>
            {cols.map((c, i) => <ColHead key={c} $sel={i < 5}>{c}</ColHead>)}
          </HeaderRow>
          <Rows>
            {rowNumbers.map(n => (
              <SheetRow key={n}>
                <RowHead $sel={n <= 6}>{n}</RowHead>
                {n <= 6 && data[n - 1].map((v, i) => <Cell key={i} $first={n === 1 && i === 0}>{v}</Cell>)}
              </SheetRow>
            ))}
          </Rows>
          <Selection><Handle /></Selection>
        </GridPane>
        <VScroll>
          <ScrollBtn $h={17}><Triangle $dir="up" /></ScrollBtn>
          <VThumb />
          <VTrack />
          <ScrollBtn $h={17}><Triangle $dir="down" /></ScrollBtn>
        </VScroll>
      </SheetArea>

      <TabsBar>
        <NavSlot $ml={25}><Triangle $dir="left" $c="#bdbdbd" /></NavSlot>
        <NavSlot $ml={23}><Triangle $dir="right" $c="#bdbdbd" /></NavSlot>
        <TabDivider $ml={41} />
        <SheetTab $w={57}>素材</SheetTab>
        <SheetTab $w={118} $active>创建csv文件</SheetTab>
        <AddSheet width="20" height="20" viewBox="0 0 20 20" fill="none" stroke="#888">
          <circle cx="10" cy="10" r="9.2" strokeWidth="1.2" />
          <path d="M5 10h10M10 5v10" strokeWidth="2" stroke="#777" />
        </AddSheet>
        <HScrollGroup>
          <Grip $ml={0} $h={15} $mt={6} />
          <HBar>
            <HBtn><Triangle $dir="left" /></HBtn>
            <HThumb />
            <HBtn $end><Triangle $dir="right" /></HBtn>
          </HBar>
        </HScrollGroup>
      </TabsBar>

      <StatusBar>
        <Txt>就绪</Txt>
        <Slot $w={16} $ml={25}>
          <svg width="16" height="15" viewBox="0 0 16 15">
            <rect x=".5" y="2.5" width="15" height="12" fill="#fff" stroke="#666" />
            <rect x="0" y="2" width="16" height="3" fill="#666" />
            <path d="M3 8h2M7 8h2M11 8h2M3 11h2M7 11h2M11 11h2" stroke="#666" />
            <circle cx="4" cy="3" r="3.2" fill="#555" />
          </svg>
        </Slot>
        <StatusRight>
          <LeftSlot $w={167}><Txt>平均值: 63.5</Txt></LeftSlot>
          <LeftSlot $w={76}><Txt>计数: 30</Txt></LeftSlot>
          <LeftSlot $w={97}><Txt>求和: 1905</Txt></LeftSlot>
          <ViewButton $w={50} $on>
            <svg width="16" height="16" viewBox="0 0 16 16"><Table w={15} h={15} cols={[5, 10]} rows={[5, 10]} c="#666" /></svg>
          </ViewButton>
          <ViewButton $w={50} $ml={-1}>
            <svg width="17" height="18" viewBox="0 0 17 18" fill="none" stroke="#666"><rect x=".5" y=".5" width="16" height="17" /><rect x="4.5" y="3.5" width="8" height="11" /><path d="M6 6h5M6 8.500h5M6 11h5" /></svg>
          </ViewButton>
          <ViewButton $w={50}>
            <svg width="17" height="18" viewBox="0 0 17 18" fill="none" stroke="#666"><rect x=".5" y=".5" width="16" height="17" /><path d="M6 .5v10h5V.5M.5 14h16" /></svg>
          </ViewButton>
          <Slot $w={10} $ml={8}><Txt>−</Txt></Slot>
          <Zoomer><ZoomThumb /></Zoomer>
          <Slot $w={10} $ml={6}><Txt>+</Txt></Slot>
          <Txt $ml={17}>100%</Txt>
        </StatusRight>
      </StatusBar>
      <Taskbar>
        <TaskActive />
        <Clock>21:21</Clock>
      </Taskbar>

      <Peek />
      <Pointer width="13" height="21" viewBox="0 0 13 21">
        <path d="M.5.5v16l4-3.500 2.800 6.500 2.500-1-2.800-6.500 5.500-.3z" fill="#fff" stroke="#222" />
      </Pointer>

      <Dialog>
        <DialogTitle>
          <span>Microsoft Excel</span>
          <svg width="13" height="13" viewBox="0 0 13 13" stroke="#222" strokeWidth="1"><path d="M.5.5l12 12M12.500.5l-12 12" /></svg>
        </DialogTitle>
        <DialogBody>
          <svg width="41" height="41" viewBox="0 0 41 41">
            <path d="M20.500 .5L41 40.500H0z" fill="#ffe000" stroke="#f2cf3a" />
            <path d="M20.500 14v17" stroke="#111" strokeWidth="1.8" />
            <path d="M20.500 33.500v3" stroke="#111" strokeWidth="2" />
          </svg>
          <DialogText>拼写检查完成，可以继续操作!</DialogText>
        </DialogBody>
        <DialogFoot><OkButton>确定</OkButton></DialogFoot>
      </Dialog>
    </Frame>
  );
}
